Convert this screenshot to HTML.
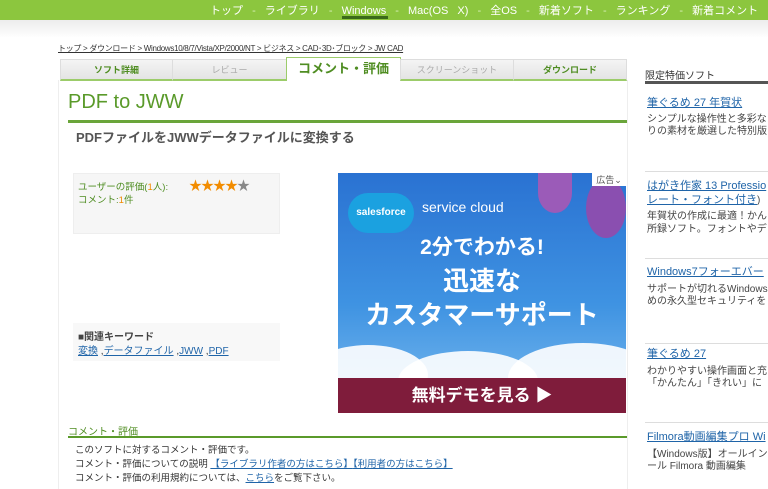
<!DOCTYPE html>
<html><head><meta charset="utf-8"><style>
*{margin:0;padding:0;box-sizing:border-box}
body{width:768px;height:489px;overflow:hidden;background:#fff;font-family:"Liberation Sans","Noto Sans CJK JP",sans-serif;position:relative;color:#333}
.a{position:absolute;white-space:nowrap}
#top{left:0;top:0;width:768px;height:20px;background:#8cc63e}
#band{left:0;top:20px;width:768px;height:18px;background:linear-gradient(#ececec,#fff)}
.bc{font-size:8px;color:#333;text-decoration:underline;letter-spacing:-0.3px}
.tab{top:59px;height:22px;background:linear-gradient(#f4f4f4,#e4e4e4);border:1px solid #ddd;border-bottom:2px solid #9ccc6a;font-size:9px;text-align:center;line-height:20px;font-weight:bold}
a,.lk{color:#1f64a8;text-decoration:underline}
.sb{font-size:10px;line-height:12.5px;color:#444}
.sep{left:645px;width:123px;height:1px;background:#ddd}
</style></head><body>
<div class="a" id="top"></div>
<div class="a" style="left:210px;top:2px;font-size:11px;color:#fff;word-spacing:6px">トップ <span style="color:#d9f0b8">-</span> ライブラリ <span style="color:#d9f0b8">-</span> Windows <span style="color:#d9f0b8">-</span> Mac(OS X) <span style="color:#d9f0b8">-</span> 全OS <span style="color:#d9f0b8">-</span> 新着ソフト <span style="color:#d9f0b8">-</span> ランキング <span style="color:#d9f0b8">-</span> 新着コメント</div>
<div class="a" style="left:342px;top:16px;width:46px;height:3px;background:#3b6a1a"></div>
<div class="a" id="band"></div>
<div class="a" style="left:58px;top:80px;width:1px;height:409px;background:#eee"></div>
<div class="a" style="left:627px;top:80px;width:1px;height:409px;background:#eee"></div>
<div class="a bc" style="left:58px;top:43px">トップ &gt; ダウンロード &gt; Windows10/8/7/Vista/XP/2000/NT &gt; ビジネス &gt; CAD･3D･ブロック &gt; JW CAD</div>
<div class="a tab" style="left:60px;width:113px;color:#4f8d22">ソフト詳細</div>
<div class="a tab" style="left:172px;width:115px;color:#aaa;font-weight:normal">レビュー</div>
<div class="a" style="left:286px;top:57px;width:115px;height:24px;background:#fff;border:1px solid #9ccc6a;border-bottom:none;font-size:13px;text-align:center;line-height:22px;color:#4f8d22;font-weight:bold">コメント・評価</div>
<div class="a tab" style="left:400px;width:114px;color:#aaa;font-weight:normal">スクリーンショット</div>
<div class="a tab" style="left:513px;width:114px;color:#4f8d22">ダウンロード</div>
<div class="a" style="left:68px;top:91px;font-size:20px;color:#5a9a2a">PDF to JWW</div>
<div class="a" style="left:68px;top:120px;width:559px;height:3px;background:#6aa53a"></div>
<div class="a" style="left:76px;top:127px;font-size:13px;font-weight:bold;color:#555">PDFファイルをJWWデータファイルに変換する</div>
<div class="a" style="left:73px;top:173px;width:207px;height:61px;background:#f6f6f6;border:1px solid #eee"></div>
<div class="a" style="left:78px;top:179px;font-size:9.5px;color:#4f8d22">ユーザーの評価(<span style="color:#f08a00">1</span>人):</div>
<div class="a" style="left:189px;top:175px;font-size:13px;color:#f28c00;letter-spacing:-1px">★★★★<span style="color:#888">★</span></div>
<div class="a" style="left:78px;top:192px;font-size:9.5px;color:#4f8d22">コメント:<span style="color:#f08a00">1</span>件</div>
<div class="a" style="left:73px;top:323px;width:207px;height:38px;background:#f8f8f8"></div>
<div class="a" style="left:78px;top:328px;font-size:10px;font-weight:bold;color:#444">■関連キーワード</div>
<div class="a" style="left:78px;top:342px;font-size:10px"><a>変換</a> ,<a>データファイル</a> ,<a>JWW</a> ,<a>PDF</a></div>
<div class="a" style="left:338px;top:173px;width:288px;height:240px;background:linear-gradient(#2a72d2,#3f93e2 55%,#7cbcef);overflow:hidden">
<div class="a" style="left:-30px;top:172px;width:120px;height:60px;background:#fff;border-radius:50%;opacity:.9"></div>
<div class="a" style="left:60px;top:178px;width:140px;height:60px;background:#fff;border-radius:50%;opacity:.9"></div>
<div class="a" style="left:170px;top:170px;width:150px;height:70px;background:#fff;border-radius:50%;opacity:.9"></div>
<div class="a" style="left:10px;top:20px;width:66px;height:40px;background:#1ba1e0;border-radius:20px;color:#fff;font-size:10px;font-weight:bold;line-height:40px;text-align:center">salesforce</div>
<div class="a" style="left:84px;top:26px;color:#fff;font-size:14px">service cloud</div>
<div class="a" style="left:200px;top:0;width:34px;height:40px;background:#9b5bb8;border-radius:0 0 50% 50%"></div>
<div class="a" style="left:248px;top:5px;width:40px;height:60px;background:#8a4fb0;border-radius:50%"></div>
<div class="a" style="left:0;top:58px;width:288px;text-align:center;color:#fff;font-size:21px;font-weight:bold">2分でわかる!</div>
<div class="a" style="left:0;top:88px;width:288px;text-align:center;color:#fff;font-size:26px;font-weight:bold">迅速な</div>
<div class="a" style="left:0;top:122px;width:288px;text-align:center;color:#fff;font-size:26px;font-weight:bold">カスタマーサポート</div>
<div class="a" style="left:0;top:205px;width:288px;height:35px;background:#7f1c3b;color:#fff;font-size:17px;font-weight:bold;text-align:center;line-height:35px">無料デモを見る ▶</div>
<div class="a" style="left:254px;top:0;width:34px;height:13px;background:#fff;font-size:9px;color:#555;text-align:center">広告⌄</div>
</div>
<div class="a" style="left:68px;top:423px;font-size:10px;color:#4f8d22">コメント・評価</div>
<div class="a" style="left:68px;top:436px;width:559px;height:2px;background:#5a9a2a"></div>
<div class="a" style="left:75px;top:444px;font-size:9.5px;line-height:14px;color:#333">このソフトに対するコメント・評価です。<br>コメント・評価についての説明 <a>【ライブラリ作者の方はこちら】</a><a>【利用者の方はこちら】</a><br>コメント・評価の利用規約については、<a>こちら</a>をご覧下さい。</div>
<div class="a" style="left:645px;top:67px;font-size:10px;color:#333">限定特価ソフト</div>
<div class="a" style="left:645px;top:81px;width:123px;height:3px;background:#555"></div>
<div class="a sb" style="left:647px;top:97px"><span class="lk" style="font-size:11px">筆ぐるめ 27 年賀状</span><div style="margin-top:3px">シンプルな操作性と多彩な<br>りの素材を厳選した特別版</div></div>
<div class="a sep" style="top:171px"></div>
<div class="a sb" style="left:647px;top:180px"><span class="lk" style="font-size:11px">はがき作家 13 Professio</span><br><span class="lk" style="font-size:11px">レート・フォント付き</span>)<div style="margin-top:4px">年賀状の作成に最適！かん<br>所録ソフト。フォントやデ</div></div>
<div class="a sep" style="top:258px"></div>
<div class="a sb" style="left:647px;top:266px"><span class="lk" style="font-size:11px">Windows7フォーエバー</span><div style="margin-top:4px">サポートが切れるWindows<br>めの永久型セキュリティを</div></div>
<div class="a sep" style="top:343px"></div>
<div class="a sb" style="left:647px;top:348px"><span class="lk" style="font-size:11px">筆ぐるめ 27</span><div style="margin-top:4px">わかりやすい操作画面と充<br>「かんたん」「きれい」に</div></div>
<div class="a sep" style="top:422px"></div>
<div class="a sb" style="left:647px;top:431px"><span class="lk" style="font-size:11px">Filmora動画編集プロ Wi</span><div style="margin-top:4px">【Windows版】オールイン<br>ール Filmora 動画編集</div></div>
</body></html>
